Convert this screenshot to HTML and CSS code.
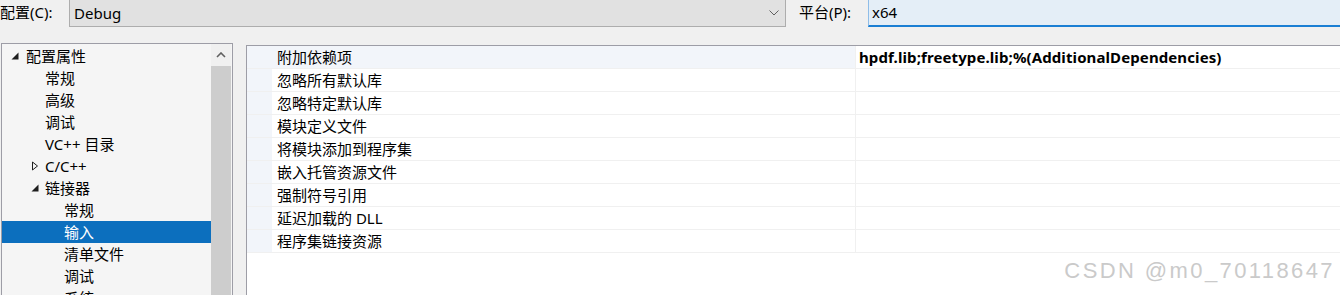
FILE: index.html
```html
<!DOCTYPE html>
<html lang="zh-CN">
<head>
<meta charset="utf-8">
<title>属性页</title>
<link rel="stylesheet" href="styles.css">
</head>
<body>
<div class="topbar">
  <span class="lbl">配置(C):</span>
  <div class="combo">
    <span class="combo-text">Debug</span>
    <svg class="chev" width="10" height="6" viewBox="0 0 10 6"><path d="M0.5 0.5 L5 5 L9.5 0.5" fill="none" stroke="#606060" stroke-width="1"/></svg>
  </div>
  <span class="lbl lbl2">平台(P):</span>
  <div class="platform">x64</div>
</div>
<div class="main">
  <div class="tree">
    <ul class="tree-list">
      <li class="node l0"><svg class="tri" width="8" height="8" viewBox="0 0 8 8"><path d="M7.5 0.5 L7.5 7.5 L0.5 7.5 Z" fill="#1e1e1e"/></svg>配置属性</li>
      <li class="node l1">常规</li>
      <li class="node l1">高级</li>
      <li class="node l1">调试</li>
      <li class="node l1">VC++ 目录</li>
      <li class="node l1"><svg class="tri tri1 open" width="8" height="10" viewBox="0 0 8 10"><path d="M1.5 1 L6.5 5 L1.5 9 Z" fill="none" stroke="#1e1e1e" stroke-width="1"/></svg>C/C++</li>
      <li class="node l1"><svg class="tri tri1" width="8" height="8" viewBox="0 0 8 8"><path d="M7.5 0.5 L7.5 7.5 L0.5 7.5 Z" fill="#1e1e1e"/></svg>链接器</li>
      <li class="node l2">常规</li>
      <li class="node l2 sel">输入</li>
      <li class="node l2">清单文件</li>
      <li class="node l2">调试</li>
      <li class="node l2">系统</li>
    </ul>
    <div class="vscroll">
      <div class="vs-arrow"><svg width="10" height="6" viewBox="0 0 10 6"><path d="M1 5 L5 1 L9 5" fill="none" stroke="#606060" stroke-width="1.6"/></svg></div>
      <div class="vs-thumb"></div>
    </div>
  </div>
  <div class="grid">
    <div class="row first"><div class="gut"></div><div class="name">附加依赖项</div><div class="val">hpdf.lib;freetype.lib;%(AdditionalDependencies)</div></div>
    <div class="row"><div class="gut"></div><div class="name">忽略所有默认库</div><div class="val"></div></div>
    <div class="row"><div class="gut"></div><div class="name">忽略特定默认库</div><div class="val"></div></div>
    <div class="row"><div class="gut"></div><div class="name">模块定义文件</div><div class="val"></div></div>
    <div class="row"><div class="gut"></div><div class="name">将模块添加到程序集</div><div class="val"></div></div>
    <div class="row"><div class="gut"></div><div class="name">嵌入托管资源文件</div><div class="val"></div></div>
    <div class="row"><div class="gut"></div><div class="name">强制符号引用</div><div class="val"></div></div>
    <div class="row"><div class="gut"></div><div class="name">延迟加载的 DLL</div><div class="val"></div></div>
    <div class="row"><div class="gut"></div><div class="name">程序集链接资源</div><div class="val"></div></div>
    <div class="watermark">CSDN @m0_70118647</div>
  </div>
</div>
</body>
</html>
```
FILE: styles.css
```css
html, body {
  margin: 0;
  padding: 0;
  width: 1340px;
  height: 295px;
  overflow: hidden;
  background: #f0f0f0;
}
body {
  font-family: "Noto Sans", "Noto Sans CJK SC", sans-serif;
  font-size: 15px;
  color: #000;
}
.topbar {
  display: flex;
  align-items: stretch;
  height: 27px;
}
.lbl {
  line-height: 25px;
  width: 69px;
  flex: none;
  white-space: nowrap;
}
.lbl2 {
  margin-left: 13px;
  width: 69px;
}
.combo {
  flex: none;
  background: #e1e1e1;
  border: 1px solid #adadad;
  border-top: none;
  display: flex;
  align-items: center;
  justify-content: space-between;
  padding: 0 6px 1px 4px;
  box-sizing: border-box;
  width: 717px;
}
.combo-text { line-height: 24px; }
.platform {
  flex: 1;
  background: #e4eef7;
  border-left: 1px solid #8fbde8;
  border-bottom: 2px solid #1a7fd4;
  padding-left: 3px;
  line-height: 25px;
}
.main {
  display: flex;
  align-items: flex-start;
  margin-top: 16px;
  gap: 13px;
}
.tree {
  margin-left: 1px;
  width: 230px;
  height: 300px;
  border: 1px solid #9d9da6;
  background: #f5f5f5;
  display: flex;
  padding-top: 1px;
}
.tree-list {
  list-style: none;
  margin: 0;
  padding: 0;
  width: 209px;
  flex: none;
}
.node {
  height: 22px;
  line-height: 22px;
  white-space: nowrap;
  position: relative;
}
.l0 { padding-left: 24px; }
.l1 { padding-left: 43px; }
.l2 { padding-left: 62px; }
.tri {
  position: absolute;
  left: 9px;
  top: 7px;
}
.tri1 { left: 29px; }
.open { top: 6px; }
.sel {
  background: #0c6fbe;
  color: #fff;
}
.vscroll {
  width: 20px;
  flex: none;
  margin-top: -1px;
  display: flex;
  flex-direction: column;
}
.vs-arrow {
  height: 22px;
  display: flex;
  align-items: center;
  justify-content: center;
  background: #f0f0f0;
}
.vs-thumb {
  flex: 1;
  background: #cdcdcd;
}
.grid {
  margin-top: 2px;
  flex: 1;
  height: 300px;
  background: #fff;
  border-left: 1px solid #9d9da6;
  border-top: 1px solid #9d9da6;
  position: relative;
}
.row {
  display: flex;
  height: 22px;
  border-bottom: 1px solid #f0f0f0;
  line-height: 23px;
}
.gut {
  width: 25px;
  flex: none;
  background: #f2f5fa;
}
.name {
  width: 578px;
  flex: none;
  padding-left: 5px;
  border-right: 1px solid #f0f0f0;
  white-space: nowrap;
}
.first .name { background: #f2f5fa; }
.val {
  flex: 1;
  padding-left: 3px;
  font-weight: bold;
  letter-spacing: 0.1px;
  white-space: nowrap;
}
.watermark {
  position: absolute;
  right: 5px;
  top: 212px;
  font-family: "Liberation Sans", Arial, sans-serif;
  font-weight: normal;
  font-size: 22px;
  letter-spacing: 2.4px;
  color: #cacaca;
}
```
